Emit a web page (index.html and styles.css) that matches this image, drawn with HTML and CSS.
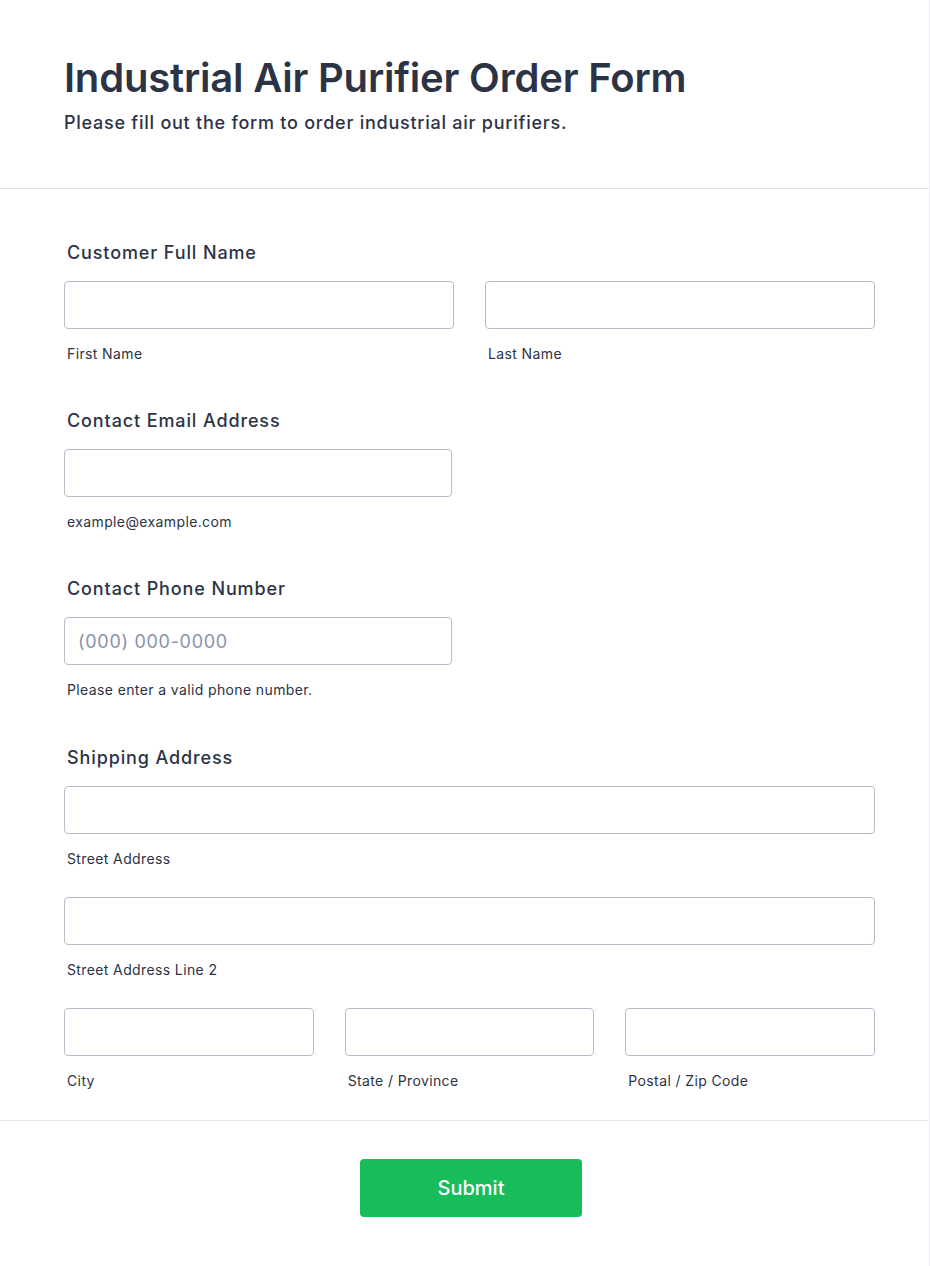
FILE: index.html
```html
<!DOCTYPE html>
<html lang="en">
<head>
<meta charset="utf-8">
<title>Industrial Air Purifier Order Form</title>
<link rel="stylesheet" href="styles.css">
</head>
<body>
<div class="page">
  <header class="header">
    <h1 class="title">Industrial Air Purifier Order Form</h1>
    <p class="subtitle">Please fill out the form to order industrial air purifiers.</p>
  </header>
  <form class="form">
    <div class="field">
      <label class="label">Customer Full Name</label>
      <div class="row two">
        <div class="sub">
          <input class="input" type="text">
          <span class="sublabel">First Name</span>
        </div>
        <div class="sub">
          <input class="input" type="text">
          <span class="sublabel">Last Name</span>
        </div>
      </div>
    </div>
    <div class="field">
      <label class="label">Contact Email Address</label>
      <div class="sub half">
        <input class="input" type="email">
        <span class="sublabel">example@example.com</span>
      </div>
    </div>
    <div class="field">
      <label class="label">Contact Phone Number</label>
      <div class="sub half">
        <input class="input" type="tel" placeholder="(000) 000-0000">
        <span class="sublabel">Please enter a valid phone number.</span>
      </div>
    </div>
    <div class="field last">
      <label class="label">Shipping Address</label>
      <div class="sub">
        <input class="input" type="text">
        <span class="sublabel">Street Address</span>
      </div>
      <div class="sub spaced">
        <input class="input" type="text">
        <span class="sublabel">Street Address Line 2</span>
      </div>
      <div class="row three spaced">
        <div class="sub">
          <input class="input" type="text">
          <span class="sublabel">City</span>
        </div>
        <div class="sub">
          <input class="input" type="text">
          <span class="sublabel">State / Province</span>
        </div>
        <div class="sub">
          <input class="input" type="text">
          <span class="sublabel">Postal / Zip Code</span>
        </div>
      </div>
    </div>
  </form>
  <div class="footer">
    <button class="submit" type="button">Submit</button>
  </div>
</div>
</body>
</html>
```

FILE: styles.css
```css
* { box-sizing: border-box; }
html, body { margin: 0; padding: 0; background: #ffffff; }
body {
  font-family: Inter, "Noto Sans", Arial, sans-serif;
  color: #2c3345;
}
.page {
  width: 930px;
  min-height: 1266px;
  border-right: 1px solid #eceef3;
}
.header {
  padding: 54px 64px 53px;
  border-bottom: 1px solid #dde1ea;
}
.title {
  margin: 0;
  font-size: 40px;
  line-height: 48px;
  font-weight: 600;
  letter-spacing: -0.2px;
}
.subtitle {
  margin: 9px 0 0;
  font-size: 18px;
  line-height: 24px;
  font-weight: 500;
  letter-spacing: 0.75px;
}
.form {
  padding: 52px 54px 30px 64px;
  border-bottom: 1px solid #e6e8ee;
}
.field {
  display: flex;
  flex-direction: column;
  margin-bottom: 46px;
}
.field.last { padding-top: 1px; margin-bottom: 0; }
.label {
  display: block;
  padding-left: 3px;
  font-size: 18px;
  line-height: 24px;
  font-weight: 500;
  letter-spacing: 0.88px;
  margin-bottom: 16px;
}
.row { display: grid; gap: 31px; }
.row.two { grid-template-columns: 1fr 1fr; }
.row.three { grid-template-columns: 1fr 1fr 1fr; }
.spaced { margin-top: 29px; }
.sub { display: flex; flex-direction: column; }
.sub.half { width: 388px; }
.input {
  display: block;
  width: 100%;
  height: 48px;
  border: 1px solid #b8bdc9;
  border-radius: 4px;
  padding: 0 13px;
  font-family: inherit;
  font-size: 18px;
  letter-spacing: 0.7px;
  color: #2c3345;
  background: #ffffff;
  outline: none;
}
.input::placeholder { color: #8894ab; }
.sublabel {
  display: block;
  margin-top: 16px;
  padding-left: 3px;
  font-size: 14px;
  line-height: 18px;
  letter-spacing: 0.38px;
  color: #2c3345;
}
.footer {
  display: flex;
  justify-content: center;
  padding: 38px 0 0 13px;
}
.submit {
  width: 222px;
  height: 58px;
  border: none;
  border-radius: 4px;
  background: #18bd5b;
  color: #ffffff;
  font-family: inherit;
  font-size: 20px;
  font-weight: 500;
  cursor: pointer;
}
```
